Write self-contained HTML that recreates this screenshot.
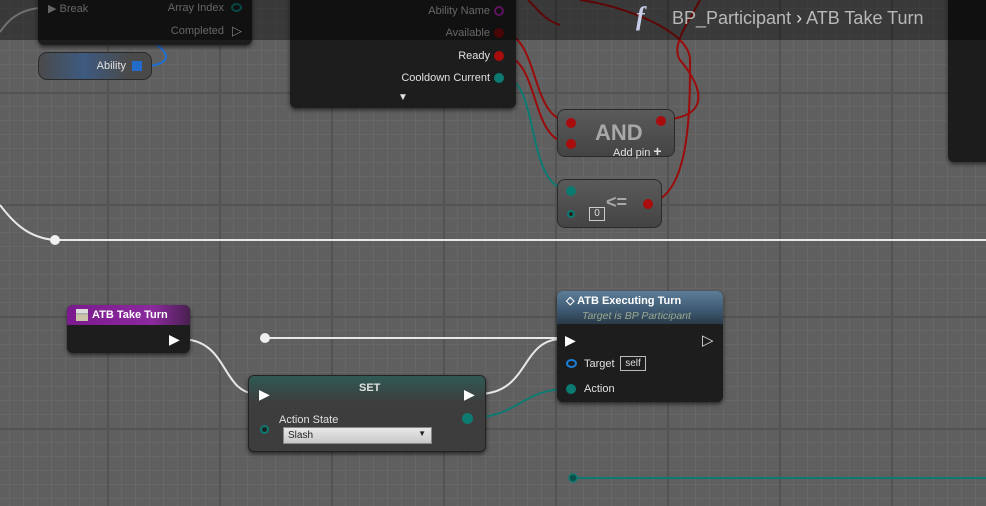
<!DOCTYPE html>
<html><head><meta charset="utf-8"><style>
*{margin:0;padding:0;box-sizing:border-box}
body{width:986px;height:506px;overflow:hidden;position:relative;font-family:"Liberation Sans",sans-serif;
background-color:#5f5f5f;
background-image:
linear-gradient(to right,#535353 2px,transparent 2px),
linear-gradient(to bottom,#535353 2px,transparent 2px),
linear-gradient(to right,#676767 1px,transparent 1px),
linear-gradient(to bottom,#676767 1px,transparent 1px);
background-size:112px 112px,112px 112px,14px 14px,14px 14px;
background-position:107px 0,0 92px,9px 0,0 8px;}
.n{position:absolute;background:#1c1d1c;border-radius:6px;box-shadow:0 2px 4px rgba(0,0,0,.6);color:#ddd;font-size:11px}
.t{position:absolute;font-size:11px;color:#e0e0e0;white-space:nowrap}
.pin{position:absolute;width:10px;height:10px;border-radius:50%}
svg{position:absolute;left:0;top:0}
.gray{background:linear-gradient(#5a5a5a,#444);border:1px solid #2a2a2a;border-radius:9px}
</style></head><body>
<svg width="986" height="506" style="z-index:1">
<g fill="none" stroke-width="2">
<path d="M150 66 C175 62,170 50,140 35 C100 18,70 10,40 0" stroke="#1f6fd6"/>
<path d="M40 8 C15 10,5 25,0 32" stroke="#bbb"/>
<path d="M505 33 C540 40,530 120,570 122" stroke="#9b0b0b"/>
<path d="M505 56 C540 60,530 143,570 143" stroke="#9b0b0b"/>
<path d="M505 78 C540 80,525 190,570 190" stroke="#0d7a72"/>
<path d="M650 203 C690 195,690 110,690 60 C690 30,620 5,580 0" stroke="#9b0b0b"/>
<path d="M660 120 C710 118,705 90,680 60 C670 45,690 20,700 0" stroke="#9b0b0b"/>
<path d="M528 0 C540 12,545 20,560 25" stroke="#9b0b0b"/>
<path d="M0 205 C15 225,30 238,55 240 L986 240" stroke="#e8e8e8"/>
<path d="M265 338 L560 338" stroke="#e8e8e8"/>
<path d="M180 339 C230 339,220 394,258 394" stroke="#e8e8e8"/>
<path d="M478 394 C530 394,520 339,562 339" stroke="#e8e8e8"/>
<path d="M467 418 C520 418,520 389,568 389" stroke="#0d7a72"/>
<path d="M573 478 L986 478" stroke="#0d7a72"/>
</g>
<circle cx="55" cy="240" r="5" fill="#f0f0f0"/>
<circle cx="265" cy="338" r="5" fill="#f0f0f0"/>
<circle cx="573" cy="478" r="4" fill="#0a4f4a" stroke="#0d7a72" stroke-width="1.5"/>
</svg>

<div class="n" style="left:38px;top:-10px;width:214px;height:55px;z-index:2">
<div class="t" style="left:10px;top:12px;color:#aaa">&#9654; Break</div>
<div class="t" style="right:28px;top:12px;color:#aaa">Array Index</div>
<div class="pin" style="right:10px;top:13px;border:2px solid #0d7a72;width:11px;height:9px"></div>
<div class="t" style="right:28px;top:35px;color:#aaa">Completed</div>
<div class="t" style="right:10px;top:33px;color:#ccc;font-size:13px">&#9655;</div>
</div>
<div class="gray" style="position:absolute;left:38px;top:52px;width:114px;height:28px;z-index:2;background:linear-gradient(90deg,#4a4a4a,#3d5a80 40%,#4a4a4a 80%)">
<div class="t" style="right:25px;top:7px">Ability</div>
<div style="position:absolute;right:9px;top:8px;width:10px;height:10px;background:repeating-linear-gradient(90deg,#1f6fd6 0 2px,transparent 2px 4px),#1f6fd6;opacity:.9"></div>
</div>

<div class="n" style="left:290px;top:-10px;width:226px;height:118px;z-index:2">
<div class="t" style="right:26px;top:15px;color:#aaa">Ability Name</div>
<div class="pin" style="right:12px;top:16px;border:2px solid #a020a0"></div>
<div class="t" style="right:26px;top:37px;color:#aaa">Available</div>
<div class="pin" style="right:12px;top:38px;background:#7a0a0a"></div>
<div class="t" style="right:26px;top:60px">Ready</div>
<div class="pin" style="right:12px;top:61px;background:#a80c0c"></div>
<div class="t" style="right:26px;top:82px">Cooldown Current</div>
<div class="pin" style="right:12px;top:83px;background:#0d7a72"></div>
<div class="t" style="left:108px;top:102px;font-size:10px">&#9660;</div>
</div>

<div class="n" style="left:948px;top:-10px;width:50px;height:172px;z-index:2;background:#1b1c1b"></div>

<div style="position:absolute;left:0;top:0;width:986px;height:40px;background:rgba(0,0,0,.4);z-index:3"></div>
<div style="position:absolute;left:636px;top:2px;z-index:4;font-family:'Liberation Serif',serif;font-style:italic;font-weight:bold;font-size:26px;color:#c8cde8">f</div>
<div style="position:absolute;left:672px;top:8px;z-index:4;font-size:18px;color:#b8b8b8">BP_Participant <span style="color:#ddd">&#8250;</span> ATB Take Turn</div>

<div class="gray" style="position:absolute;left:557px;top:109px;width:118px;height:48px;z-index:2;border-radius:8px">
<div class="pin" style="left:8px;top:8px;background:#a80c0c"></div>
<div class="pin" style="left:8px;top:29px;background:#a80c0c"></div>
<div class="pin" style="right:8px;top:6px;background:#a80c0c"></div>
<div class="t" style="left:37px;top:10px;font-size:22px;font-weight:bold;color:#a8a8a8">AND</div>
<div class="t" style="left:55px;top:33px;font-size:11px">Add pin <b style="font-size:14px">+</b></div>
</div>
<div class="gray" style="position:absolute;left:557px;top:179px;width:105px;height:49px;z-index:2;border-radius:8px">
<div class="pin" style="left:8px;top:6px;background:#0d7a72"></div>
<div class="pin" style="left:9px;top:30px;background:#222;border:2px solid #0d7a72;width:8px;height:8px"></div>
<div class="t" style="left:48px;top:12px;font-size:18px;font-weight:bold;color:#a8a8a8">&lt;=</div>
<div style="position:absolute;left:31px;top:27px;width:16px;height:14px;border:1px solid #ccc;color:#ddd;font-size:10px;text-align:center;line-height:12px">0</div>
<div class="pin" style="right:8px;top:19px;background:#a80c0c"></div>
</div>

<div class="n" style="left:67px;top:305px;width:123px;height:48px;z-index:2;overflow:hidden">
<div style="height:20px;background:linear-gradient(90deg,#7a1a8c,#8a2a9c 70%,#4a2050)">
<div style="position:absolute;left:9px;top:4px;width:12px;height:12px;background:linear-gradient(#ddd 35%,#aaa 35% 45%,#cbc3a8 45%)"></div>
<div class="t" style="left:25px;top:4px;font-weight:bold;color:#fff">ATB Take Turn</div></div>
<div class="t" style="left:102px;top:26px;font-size:14px;color:#fff">&#9654;</div>
</div>

<div class="n" style="left:248px;top:375px;width:238px;height:77px;z-index:2;overflow:hidden;background:#3d3d3d;border:1px solid #222">
<div style="height:26px;background:linear-gradient(#2f5a55,#3d3d3d)"></div>
<div class="t" style="left:110px;top:6px;font-weight:bold">SET</div>
<div class="t" style="left:10px;top:10px;font-size:14px;color:#fff">&#9654;</div>
<div class="t" style="left:215px;top:10px;font-size:14px;color:#fff">&#9654;</div>
<div class="t" style="left:30px;top:38px">Action State</div>
<div class="pin" style="left:11px;top:49px;background:#222;border:2px solid #0d7a72;width:9px;height:9px"></div>
<div class="pin" style="left:213px;top:37px;background:#0d7a72;width:11px;height:11px"></div>
<div style="position:absolute;left:34px;top:51px;width:149px;height:17px;background:linear-gradient(#e8e8e8,#c8c8c8);border:1px solid #888;color:#222;font-size:10px;padding:2px 4px">Slash<span style="position:absolute;right:5px;top:1px;font-size:8px">&#9660;</span></div>
</div>

<div class="n" style="left:557px;top:291px;width:166px;height:111px;z-index:2;overflow:hidden">
<div style="height:33px;background:linear-gradient(#5d7d98,#3d5870 60%,#2a3a48)"></div>
<div class="t" style="left:9px;top:3px;font-weight:bold;color:#fff">&#9671; ATB Executing Turn</div>
<div class="t" style="left:25px;top:19px;font-style:italic;color:#9aa890;font-size:10.5px">Target is BP Participant</div>
<div class="t" style="left:8px;top:41px;font-size:14px;color:#fff">&#9654;</div>
<div class="t" style="left:145px;top:40px;font-size:15px;color:#ddd">&#9655;</div>
<div class="pin" style="left:9px;top:68px;border:2px solid #1a7fd8;width:11px;height:9px"></div>
<div class="t" style="left:27px;top:67px">Target</div>
<div style="position:absolute;left:63px;top:65px;width:26px;height:15px;border:1px solid #bbb;color:#ddd;font-size:10px;text-align:center;line-height:13px">self</div>
<div class="pin" style="left:9px;top:93px;background:#0d7a72"></div>
<div class="t" style="left:27px;top:92px">Action</div>
</div>
</body></html>
